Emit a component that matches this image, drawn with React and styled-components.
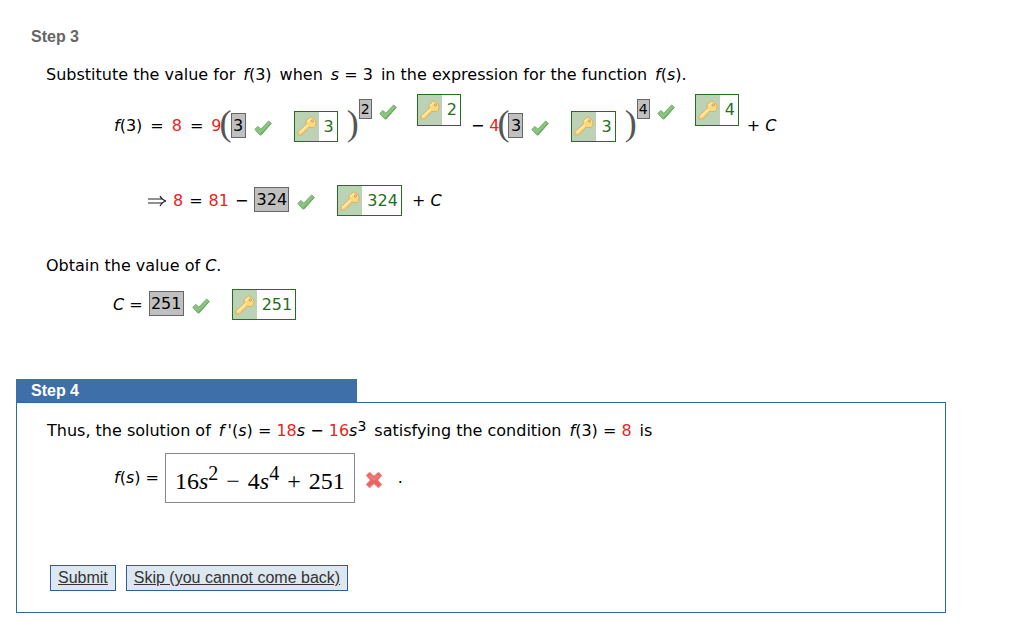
import styled, { createGlobalStyle } from "styled-components";

const Check = () => (
    <CheckIcon viewBox="0 0 18 16" role="img" aria-label="Correct">
        <path d="M.8 9.4 L4 6.4 L6.8 9.2 L14.6 1 L17.4 3.4 L7.2 15 L5.8 15 Z" fill="#86c17c" stroke="#79b070" strokeWidth="1" strokeLinejoin="round" />
        <path d="M2.6 9.2 L6.6 12 L15.4 2.8" fill="none" stroke="#8cc682" strokeWidth="1.6" />
        <path d="M6.6 14.4 L16.6 3.8" fill="none" stroke="#6ba263" strokeWidth="1" />
    </CheckIcon>
);

const Cross = () => (
    <CrossIcon viewBox="0 0 16 16" role="img" aria-label="Incorrect">
        <path d="M3.6 .8 L8 4.8 L12.4 .8 L15.2 3.6 L11.2 8 L15.2 12.4 L12.4 15.2 L8 11.2 L3.6 15.2 L.8 12.4 L4.8 8 L.8 3.6 Z" fill="#e9625f" stroke="#ea7572" strokeWidth="1.4" strokeLinejoin="round" />
        <path d="M3.4 3.4 L8 7.4 L12.6 3.4" fill="none" stroke="#ee7f7c" strokeWidth="2" />
    </CrossIcon>
);

const Key = () => (
    <KeyIcon viewBox="0 0 20 20" aria-hidden="true">
        <path d="M9 4.6 L13.4 1 L15 1 L19 5 L18.8 9.4 L16.6 11.6 L11.8 11.2 L10.4 12.6 L10.2 14.2 L8.4 14.4 L8.2 16 L6.6 16.4 L5 18.8 L1.2 19.2 L.8 15.8 L9.2 8.4 Z" fill="#f9da7e" stroke="#e0ae60" strokeWidth="1" strokeLinejoin="round" />
        <path d="M2.6 16.6 L10.4 9.2 M10.6 5.4 L13.6 2.8" fill="none" stroke="#fdeeb4" strokeWidth="1.4" />
        <circle cx="15.4" cy="5" r="1.3" fill="#cfcf9c" stroke="#d39a4a" strokeWidth=".7" />
    </KeyIcon>
);

const Implies = () => (
    <ArrowIcon viewBox="0 0 19 12" role="img" aria-label="implies">
        <path d="M0 4 H15 M0 8 H15 M12 1 Q14 5 18 6 Q14 7 12 11" fill="none" stroke="#222" strokeWidth="1.2" />
    </ArrowIcon>
);

// Graded blank: what was typed, the mark, then the key
const Blank = ({ value, label, small }) => (
    <BlankGroup>
        <Answer value={value} readOnly aria-label={label} $small={small} $digits={value.length} />
        <Mark $small={small}><Check /></Mark>
        <KeyBox $small={small}>
            <KeySide><Key /></KeySide>
            <KeyValue>{value}</KeyValue>
        </KeyBox>
    </BlankGroup>
);

const Power = ({ sign, factor, exponent, name }) => (
    <PowerGroup>
        {sign && <Sign>{sign}</Sign>}
        <Red>{factor}</Red>
        <OpenParen>(</OpenParen>
        <Blank value="3" label={`${name} base`} />
        <CloseParen>)</CloseParen>
        <Raised>
            <Blank value={exponent} label={`${name} exponent`} small />
        </Raised>
    </PowerGroup>
);

export default function App() {
    return (
        <>
            <GlobalStyle />
            <Page>
                <StepThree>
                    <StepTitle>Step 3</StepTitle>
                    <Text>
                        Substitute the value for<Term><i>f</i>(3)</Term>when<Term><i>s</i> = 3</Term>in the expression for the function<Term><i>f</i>(<i>s</i>).</Term>
                    </Text>
                    <PowerRow>
                        <span><i>f</i>(3)</span>
                        <span>=</span>
                        <Red>8</Red>
                        <span>=</span>
                        <Power factor="9" exponent="2" name="First term" />
                        <Power sign="−" factor="4" exponent="4" name="Second term" />
                        <span>+ <i>C</i></span>
                    </PowerRow>
                    <ImpliesRow>
                        <Implies />
                        <Red>8</Red>
                        <span>=</span>
                        <Red>81</Red>
                        <span>−</span>
                        <Blank value="324" label="Second term value" />
                        <Tail>+ <i>C</i></Tail>
                    </ImpliesRow>
                    <Text>Obtain the value of <i>C</i>.</Text>
                    <ConstantRow>
                        <span><i>C</i> =</span>
                        <Blank value="251" label="C" />
                    </ConstantRow>
                </StepThree>

                <StepFour>
                    <Tab>Step 4</Tab>
                    <Panel>
                        <Text>
                            Thus, the solution of<Term><i>f&thinsp;</i>'(<i>s</i>) = <Red>18</Red><i>s</i> − <Red>16</Red><i>s</i><sup>3</sup></Term>satisfying the condition<Term><i>f</i>(3) = <Red>8</Red></Term>is
                        </Text>
                        <SolutionRow>
                            <span><i>f</i>(<i>s</i>) =</span>
                            <MathBox>
                                16<i>s</i><sup>2</sup> <Operator>−</Operator> 4<i>s</i><sup>4</sup> <Operator>+</Operator> 251
                            </MathBox>
                            <Cross />
                            <span>.</span>
                        </SolutionRow>
                        <Buttons>
                            <Button type="button">Submit</Button>
                            <Button type="button">Skip (you cannot come back)</Button>
                        </Buttons>
                    </Panel>
                </StepFour>
            </Page>
        </>
    );
}

// Design
const GlobalStyle = createGlobalStyle`
  body {
    margin: 0;
    background: #fff;
    color: #000;
    font: 16px/20px Verdana, "DejaVu Sans", sans-serif;
  }

  * {
    box-sizing: border-box;
  }

  sup {
    font-size: 14px;
    line-height: 0;
    vertical-align: 5px;
  }
`;

const Page = styled.main`
  padding: 27px 78px 30px 16px;
`;

const StepThree = styled.section`
  padding-left: 30px;
`;

const StepTitle = styled.h2`
  margin: 0 0 18px -15px;
  font: bold 16px/20px "Liberation Sans", sans-serif;
  color: #666;
`;

const Text = styled.p`
  margin: 0;
  white-space: nowrap;
`;

const Term = styled.span`
  margin: 0 8px;
`;

const Red = styled.span`
  color: #e8241c;
`;

const Row = styled.div`
  display: flex;
  align-items: center;
  gap: 6px;
  white-space: nowrap;
`;

const PowerRow = styled(Row)`
  gap: 8px;
  height: 64px;
  margin-top: 9px;
  padding-left: 68px;
`;

const ImpliesRow = styled(Row)`
  margin: 27px 0 40px;
  padding-left: 102px;
`;

const ConstantRow = styled(Row)`
  margin-top: 13px;
  padding-left: 67px;
`;

const PowerGroup = styled.div`
  display: flex;
  align-items: center;
`;

const Sign = styled.span`
  margin: 0 5px 0 2px;
`;

const Tail = styled.span`
  margin-left: 4px;
`;

const Paren = styled.span`
  padding-bottom: 6px;
  font: 36px/40px "Liberation Serif", serif;
  color: #555;
`;

const OpenParen = styled(Paren)`
  width: 11px;
  margin-left: -2px;
`;

const CloseParen = styled(Paren)`
  width: 9px;
  margin: 0 3px 0 9px;
`;

const Raised = styled.div`
  padding-bottom: 32px;
`;

const BlankGroup = styled.div`
  display: flex;
  align-items: center;
`;

const Answer = styled.input`
  width: ${({ $digits, $small }) => ($small ? 13 : $digits * 10 + 5)}px;
  height: ${({ $small }) => ($small ? 20 : 25)}px;
  margin: 0 0 2px;
  padding: 0;
  border: 1px solid #666;
  border-radius: 0;
  background: #c0c0c0;
  font: ${({ $small }) => ($small ? 14 : 16)}px "DejaVu Sans", sans-serif;
  text-align: center;
`;

const Mark = styled.span`
  display: flex;
  margin: ${({ $small }) => ($small ? "4px 20px 0 7px" : "3px 22px 0 8px")};
`;

const CheckIcon = styled.svg`
  width: 18px;
  height: 16px;
`;

const KeyBox = styled.span`
  display: flex;
  height: ${({ $small }) => ($small ? 32 : 31)}px;
  border: 1px solid #24701a;
  color: #24701a;
`;

const KeySide = styled.span`
  display: flex;
  align-items: center;
  justify-content: center;
  width: 24px;
  background: #bcd2b6;
`;

const KeyIcon = styled.svg`
  width: 20px;
  height: 20px;
`;

const KeyValue = styled.span`
  padding: 5px 3px 0 5px;
`;

const ArrowIcon = styled.svg`
  width: 19px;
  height: 12px;
`;

const StepFour = styled.section`
  margin-top: 59px;
`;

const Tab = styled.h2`
  width: 36.7%;
  margin: 0;
  padding: 2px 15px 1px;
  background: #3f6fa8;
  color: #fff;
  font: bold 16px/20px "Liberation Sans", sans-serif;
`;

const Panel = styled.div`
  padding: 18px 30px 21px;
  border: 1px solid #2f66a5;
`;

const SolutionRow = styled(Row)`
  margin-top: 12px;
  padding-left: 67px;
`;

const MathBox = styled.div`
  height: 50px;
  padding: 14px 9px 0;
  border: 1px solid #888;
  font: 24px/26px "Liberation Serif", serif;

  sup {
    font-size: 20px;
    vertical-align: 9px;
  }
`;

const Operator = styled.span`
  margin: 0 2px;
`;

const CrossIcon = styled.svg`
  width: 16px;
  height: 16px;
  margin: 3px 10px 0 5px;
`;

const Buttons = styled.div`
  display: flex;
  gap: 10px;
  margin: 62px 0 0 3px;
`;

const Button = styled.button`
  height: 26px;
  padding: 0 7px;
  border: 1px solid #2f5f98;
  background: #dce7ef;
  color: #333;
  font: 16px/20px "Liberation Sans", sans-serif;
  text-decoration: underline;
  cursor: pointer;
`;
